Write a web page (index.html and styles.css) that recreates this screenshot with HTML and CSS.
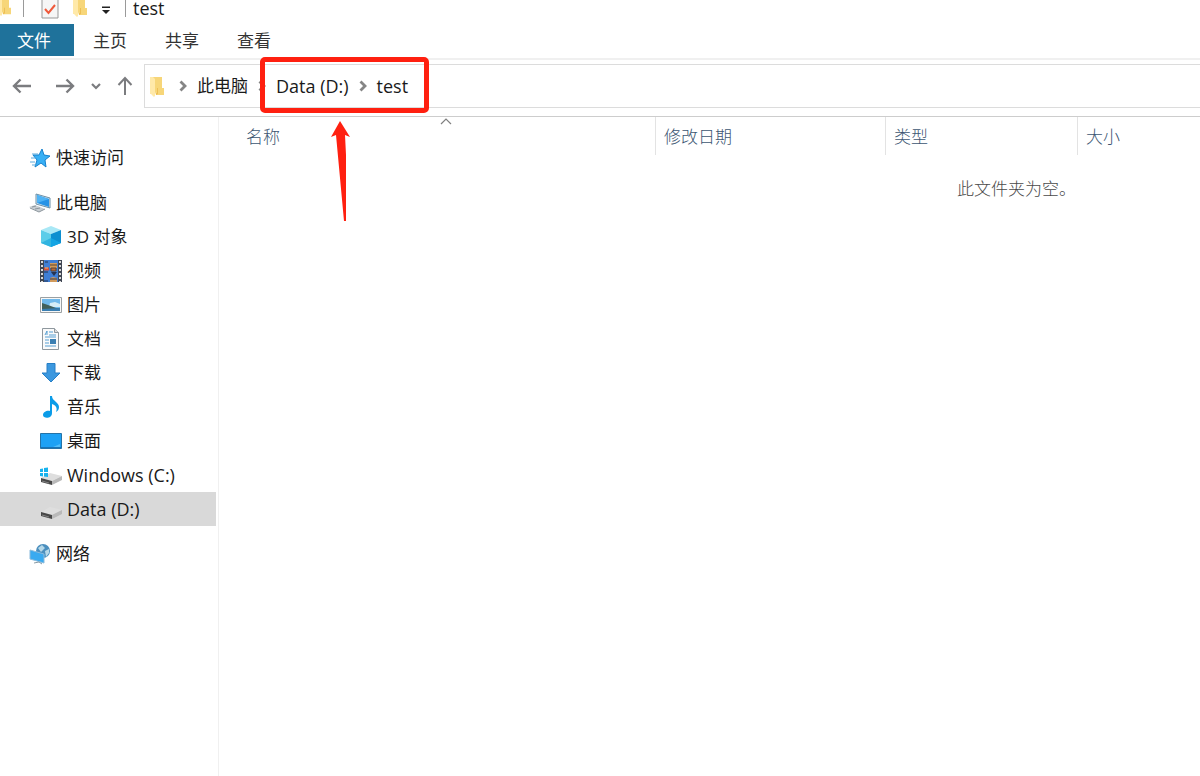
FILE: index.html
```html
<!DOCTYPE html>
<html lang="zh-CN">
<head>
<meta charset="utf-8">
<meta name="viewport" content="width=device-width, initial-scale=1">
<title>test</title>
<link rel="stylesheet" href="styles.css">
</head>
<body>
<svg class="symbols" aria-hidden="true">
  <symbol id="folder" viewBox="0 0 14 21">
    <path d="M0 1h12v11h2v7H6z" fill="#f7d679"/>
    <path d="M0 1h3l2 2v17l-1 1-3-3H0z" fill="#ffe9a9"/>
    <path d="M6 19v-2h1v-5h1v6z" fill="#eebf55"/>
  </symbol>
  <symbol id="chevron" viewBox="0 0 8 12">
    <path d="M1.500 1.500L6 6l-4.500 4.500" fill="none" stroke="#858585" stroke-width="2.800"/>
  </symbol>
  <symbol id="drive" viewBox="0 0 22 18">
    <path d="M1 11l9-5 12 3-10 5z" fill="#dedede"/>
    <path d="M12 14l10-5v4l-10 5z" fill="#b9b9b9"/>
    <path d="M1 11l11 3v4L1 15z" fill="#484848"/>
    <path d="M2 14l7 2" stroke="#858585"/>
  </symbol>
</svg>

<header>
  <div class="titlebar">
    <svg class="title-folder-cut" viewBox="3 0 11 21" preserveAspectRatio="none"><use href="#folder" width="14" height="21"/></svg>
    <span class="rule rule-first"></span>
    <button class="plain" aria-label="属性">
      <svg width="18" height="22" viewBox="0 0 18 22"><path d="M1 0h16v21H1z" fill="#f6f6f6" stroke="#999"/><path d="M4 12l3.500 4L14 8" fill="none" stroke="#ef5a3c" stroke-width="2"/></svg>
    </button>
    <button class="plain title-folder" aria-label="新建文件夹"><svg width="14" height="21"><use href="#folder"/></svg></button>
    <button class="plain title-menu" aria-label="自定义快速访问工具栏"><svg width="10" height="8" viewBox="0 0 10 8"><path d="M1 .500h8v1.500H1zM1 4h8L5 8z" fill="#222"/></svg></button>
    <span class="rule"></span>
    <h1 class="title">test</h1>
  </div>
  <nav class="tabs" aria-label="功能区">
    <button class="tab tab-file">文件</button>
    <button class="tab">主页</button>
    <button class="tab">共享</button>
    <button class="tab">查看</button>
  </nav>
  <div class="navbar">
    <div class="nav-buttons">
      <button class="plain back" aria-label="后退"><svg width="20" height="16" viewBox="0 0 20 16"><path d="M19 8H2M8.500 1.500L2 8l6.500 6.500" fill="none" stroke="#7b7c7f" stroke-width="2.400"/></svg></button>
      <button class="plain" aria-label="前进"><svg width="20" height="16" viewBox="0 0 20 16"><path d="M1 8h17M11.500 1.500L18 8l-6.500 6.500" fill="none" stroke="#7b7c7f" stroke-width="2.400"/></svg></button>
      <button class="plain" aria-label="最近位置"><svg width="10" height="8" viewBox="0 0 10 8"><path d="M1 2l4 4 4-4" fill="none" stroke="#7b7c7f" stroke-width="2.200"/></svg></button>
      <button class="plain" aria-label="上移"><svg width="16" height="20" viewBox="0 0 16 20"><path d="M8 19V2M1.500 9L8 2l6.500 7" fill="none" stroke="#7b7c7f" stroke-width="2"/></svg></button>
    </div>
    <div class="address">
      <svg class="address-folder" width="14" height="21"><use href="#folder"/></svg>
      <svg width="8" height="12"><use href="#chevron"/></svg>
      <a class="crumb" href="#">此电脑</a>
      <svg width="8" height="12"><use href="#chevron"/></svg>
      <a class="crumb latin" href="#">Data (D:)</a>
      <svg width="8" height="12"><use href="#chevron"/></svg>
      <a class="crumb latin" href="#">test</a>
    </div>
  </div>
</header>

<main>
  <nav class="sidebar" aria-label="导航窗格">
    <ul class="tree">
      <li><a class="row" href="#">
        <svg class="icon" viewBox="0 0 22 22"><path d="M13 2l2 6 6 1-5 4 1 7-5-4-6 4 2-7-4-5 6 0z" fill="#38b0f5" stroke="#1681cd"/><path d="M3 7h6M2 11h5M1 15h5M3 18h4" stroke="#5ba9dc"/></svg>
        快速访问</a></li>
    </ul>
    <ul class="tree">
      <li><a class="row" href="#">
        <svg class="icon" viewBox="0 0 22 22"><path d="M7 2l14 4v10L7 12z" fill="#d9e7ef" stroke="#6b90a8"/><path d="M8 3l12 4v8L8 11z" fill="#2793e6"/><path d="M8 3l12 4-12 4z" fill="#4fb3f5"/><path d="M0 15l6-2 10 4-6 3z" fill="#c7cdd2"/><path d="M3 15l4-1M6 17l5-1M1 16l9 4 6-3" fill="none" stroke="#8c969d"/></svg>
        此电脑</a>
        <ul class="children">
          <li><a class="row" href="#">
            <svg class="icon" viewBox="0 0 22 22"><path d="M11 0l10 4-10 4L1 4z" fill="#a9e8f6"/><path d="M1 4l10 4v13L1 17z" fill="#5ccde9"/><path d="M11 8l10-4v13l-10 4z" fill="#0d8fd0"/><path d="M1 17l10-5v9z" fill="#31b4e0"/><path d="M11 12l10 5-10 4z" fill="#14a5e4"/></svg>
            3D 对象</a></li>
          <li><a class="row" href="#">
            <svg class="icon" viewBox="0 0 22 22"><path d="M0 0h22v22H0z" fill="#404653"/><path d="M4 0h14v22H4z" fill="#3f7ed5"/><path d="M2 1v21M20 1v21" stroke="#d9d9d9" stroke-width="2" stroke-dasharray="2 2"/><path d="M10 3h7v5h-7z" fill="#d19a5c"/><path d="M10 5h7M11 8h5v3h-5z" stroke="#5b4532" fill="#b8693a"/><path d="M11 12h6l-3 4z" fill="#273451"/><path d="M10 18l3-1 4 1v4h-7z" fill="#d19a5c"/><path d="M10 19h7M4 21h4M4 12h4M5 2h3" stroke="#273451"/><path d="M4 9h5" stroke="#d34f3b" stroke-width="3"/><path d="M5 8h3" stroke="#e7bd72"/></svg>
            视频</a></li>
          <li><a class="row" href="#">
            <svg class="icon" viewBox="0 0 22 22"><path d="M.500 3.500h21v15H.500z" fill="#f7f7f7" stroke="#9aa0a3"/><path d="M2 5h18v12H2z" fill="#70b9ec"/><path d="M10 9l5-1 5 2v3H9z" fill="#d5edf8"/><path d="M2 9l6 2 8 3 4 0v3H2z" fill="#41605b"/><path d="M2 15l18-1v3H2z" fill="#397eb2"/></svg>
            图片</a></li>
          <li><a class="row" href="#">
            <svg class="icon" viewBox="0 0 22 22"><path d="M2.500.500h12l4 4v17h-16z" fill="#fafafa" stroke="#8f989e"/><path d="M14.500.500v4h4" fill="#ddd" stroke="#8f989e"/><path d="M5 7l2-4v4M9 4h4M9 7h7M5 9h11M5 12h4M5 15h4M5 18h11" fill="none" stroke="#579fd3"/><path d="M10 11h6v5h-6z" fill="#3b7fb2"/></svg>
            文档</a></li>
          <li><a class="row" href="#">
            <svg class="icon" viewBox="0 0 22 22"><path d="M7 1.500h8V11h5l-9 9-9-9h5z" fill="#3c98df" stroke="#267fc6"/></svg>
            下载</a></li>
          <li><a class="row" href="#">
            <svg class="icon" viewBox="0 0 22 22"><path d="M10 0h2c0 5 7 6 7 11 0 2-1 4-3 5 2-5-1-7-4-8v9c0 6-9 6-9 2 0-3 4-5 7-4z" fill="#0b9ce8"/></svg>
            音乐</a></li>
          <li><a class="row" href="#">
            <svg class="icon" viewBox="0 0 22 22"><path d="M.500 3.500h21v15H.500z" fill="#1da1f5" stroke="#2573a7"/><path d="M20 5v9l-7 3h7z" fill="#51bdf8"/><path d="M1 17.500h20" stroke="#1673b8"/></svg>
            桌面</a></li>
          <li><a class="row latin" href="#">
            <svg class="icon" viewBox="0 0 22 22"><use href="#drive" y="3" width="22" height="18"/><path d="M0 5l3-.500V8H0zM4 4l4-.500V8H4zM0 9h3v3.500L0 12zM4 9h4v4l-4-.500z" fill="#18b3ee"/></svg>
            Windows (C:)</a></li>
          <li><a class="row row-selected latin" href="#" aria-current="true">
            <svg class="icon" viewBox="0 0 22 22"><use href="#drive" y="3" width="22" height="18"/></svg>
            Data (D:)</a></li>
        </ul>
      </li>
    </ul>
    <ul class="tree">
      <li><a class="row" href="#">
        <svg class="icon" viewBox="0 0 22 22"><circle cx="14" cy="8" r="7" fill="#4b8fbe"/><path d="M9 5l4-3 3 3-4 4zM16 8l4-2 0 4-3 4z" fill="#b6d8e8"/><path d="M1 7l14 4v9L1 16z" fill="#39aaf0" stroke="#8bbbdc"/><path d="M5 20l5-1 3 2" fill="none" stroke="#889aa5"/></svg>
        网络</a></li>
    </ul>
  </nav>

  <section class="content">
    <table class="files">
      <colgroup><col class="col-name"><col class="col-date"><col class="col-type"><col></colgroup>
      <thead>
        <tr>
          <th class="name" aria-sort="ascending">名称<svg class="sort" width="12" height="7" viewBox="0 0 12 7"><path d="M1 6l5-5 5 5" fill="none" stroke="#808080" stroke-width="1.200"/></svg></th>
          <th>修改日期</th>
          <th>类型</th>
          <th>大小</th>
        </tr>
      </thead>
    </table>
    <p class="empty">此文件夹为空。</p>
  </section>
</main>

<div class="highlight"></div>
<svg class="arrow" width="20" height="102" viewBox="0 0 20 102"><path d="M9 0l10 16-5-2 1 20 0 66-2 0L5 14l-5 2z" fill="#ff2010"/></svg>
</body>
</html>
```
FILE: styles.css
```css
* { box-sizing: border-box; }

body {
  display: flex;
  flex-direction: column;
  min-height: 100vh;
  margin: 0;
  overflow-x: hidden;
  background: #fff;
  color: #1a1a1a;
  font: 17px/24px "Open Sans", "Noto Sans CJK SC", sans-serif;
}

button { font: inherit; }
a { color: inherit; text-decoration: none; }
ul { margin: 0; padding: 0; list-style: none; }
svg { display: block; flex: none; }

.symbols { position: absolute; width: 0; height: 0; }
.plain { display: block; padding: 0; border: 0; background: none; }
.latin { font-size: 18px; }

.titlebar {
  display: flex;
  align-items: flex-start;
  height: 24px;
}
.titlebar .plain { margin-top: -3px; }
.title-folder-cut { width: 11px; height: 19px; margin-top: -3px; }
.rule { width: 1px; height: 17px; background: #9a9a9a; }
.rule-first { margin: 0 17px 0 12px; }
.titlebar .title-folder { margin: -4px 14px 0 14px; }
.titlebar .title-menu { margin: 6px 14px 0 0; }
.title {
  margin: 0 0 0 7px;
  font-size: 18px;
  font-weight: 400;
  line-height: 16px;
}

.tabs {
  display: flex;
  height: 36px;
  border-bottom: 2px solid #f0f0f0;
}
.tab {
  height: 32px;
  padding: 2px 19px 0;
  border: 0;
  background: none;
  color: #333;
}
.tab-file {
  width: 74px;
  padding: 2px 23px 0 17px;
  background: #1f729b;
  color: #fff;
}

.navbar {
  display: flex;
  align-items: center;
  height: 57px;
  padding-bottom: 4px;
  border-bottom: 1px solid #cdcdcd;
}
.nav-buttons {
  display: flex;
  align-items: center;
  gap: 16px;
  width: 144px;
  padding-left: 12px;
}
.back { margin-right: 7px; }
.address {
  display: flex;
  flex: 1;
  align-items: center;
  gap: 10px;
  height: 44px;
  padding-left: 5px;
  border: 1px solid #dcdcdc;
  border-right: 0;
}
.address-folder { margin-right: 5px; }

main { display: flex; flex: 1; }
.sidebar {
  display: flex;
  flex-direction: column;
  gap: 11px;
  width: 219px;
  padding: 24px 2px 24px 0;
  border-right: 1px solid #f0f0f0;
}
.row {
  display: flex;
  align-items: center;
  gap: 5px;
  height: 34px;
  padding-left: 29px;
}
.children .row { padding-left: 40px; }
.row-selected { background: #d9d9d9; }
.icon { width: 22px; height: 22px; }

.content { flex: 1; min-width: 0; }
.files {
  width: 100%;
  border-collapse: separate;
  border-spacing: 0;
  table-layout: fixed;
}
.col-name { width: 437px; }
.col-date { width: 230px; }
.col-type { width: 192px; }
.files th {
  height: 38px;
  padding: 2px 8px 0;
  border-right: 1px solid #e3e3e3;
  color: #3c5672;
  font-weight: 300;
  text-align: left;
}
.files th:last-child { border-right: 0; }
.files .name { position: relative; padding-left: 27px; }
.sort { position: absolute; top: 1px; left: 221px; }
.empty {
  margin: 22px 0 0;
  padding-left: 738px;
  color: #4a4a4a;
  font-weight: 300;
}

.highlight {
  position: absolute;
  top: 57px;
  left: 260px;
  width: 169px;
  height: 56px;
  border: 5px solid #ff2010;
  border-radius: 5px;
}
.arrow { position: absolute; top: 121px; left: 331px; }
```
